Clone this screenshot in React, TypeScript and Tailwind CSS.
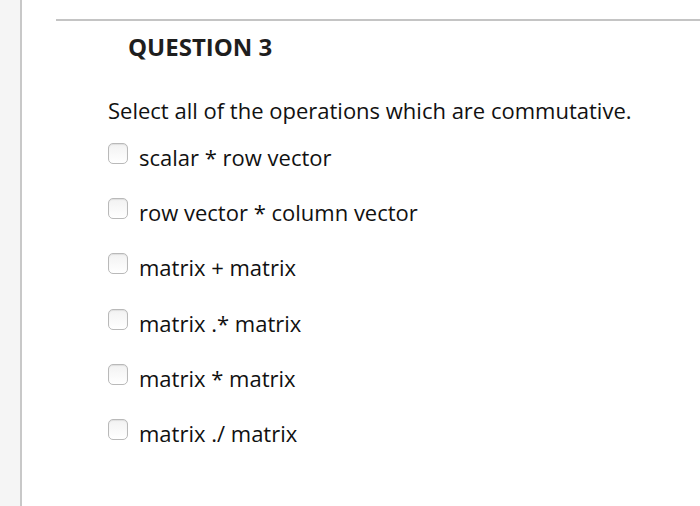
const options = [
  'scalar * row vector',
  'row vector * column vector',
  'matrix + matrix',
  'matrix .* matrix',
  'matrix * matrix',
  'matrix ./ matrix',
];

function Checkbox() {
  return (
    <span className="mt-[1px] inline-block h-[21px] w-[20px] shrink-0 rounded-[5px] border border-[#b9b9b9] bg-gradient-to-b from-[#f2f2f2] to-white shadow-[inset_0_1px_1px_rgba(0,0,0,0.08)]" />
  );
}

export default function App() {
  return (
    <div className="flex h-[506px] w-[700px] bg-white font-['Open_Sans',sans-serif] text-[#111]">
      <div className="w-[22px] shrink-0 border-r-2 border-[#c8c8c8] bg-[#f5f5f5]" />
      <div className="flex-1 pl-[34px] pt-[19px]">
        <div className="border-t-2 border-[#c4c4c4]" />
        <h2 className="mt-[9px] pl-[72px] text-[24px] font-bold leading-[33px] text-[#1e1e1e]">QUESTION 3</h2>
        <p className="mt-[32px] pl-[52px] text-[22px] leading-[30px]">
          Select all of the operations which are commutative.
        </p>
        <ul className="mt-[17px] flex flex-col pl-[52px]">
          {options.map((o) => (
            <li key={o} className="flex h-[55.2px] items-start gap-[11px]">
              <Checkbox />
              <span className="text-[22px] leading-[30px]">{o}</span>
            </li>
          ))}
        </ul>
      </div>
    </div>
  );
}
